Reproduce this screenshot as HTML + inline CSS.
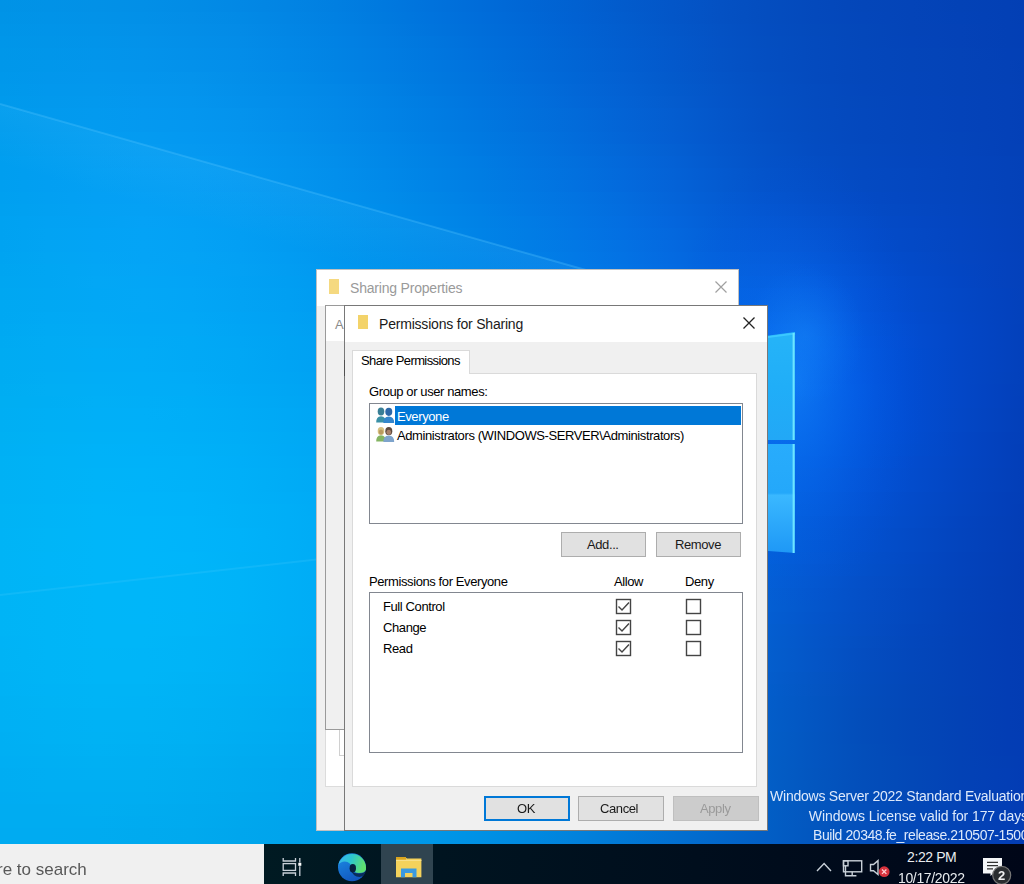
<!DOCTYPE html>
<html><head><meta charset="utf-8">
<style>
html,body{margin:0;padding:0;width:1024px;height:884px;overflow:hidden;background:#0080e0;}
body{position:relative;font-family:"Liberation Sans",sans-serif;}
#bg{position:absolute;left:0;top:0;width:1024px;height:844px;overflow:hidden;}
#bg div{position:absolute;left:0;width:1024px;}
.abs{position:absolute;}
.t{position:absolute;white-space:pre;line-height:1;}
.dlg{position:absolute;box-sizing:border-box;}
.ui{font-size:13px;letter-spacing:-0.4px;color:#000;}
.btn{position:absolute;box-sizing:border-box;background:#e1e1e1;border:1px solid #adadad;}
.cb{position:absolute;box-sizing:border-box;width:14px;height:14px;border:1px solid #333;background:#fff;}
#wrap{position:absolute;left:0;top:0;width:1024px;height:884px;filter:blur(0.45px);}
</style></head><body><div id="wrap">
<div id="bg"><div style="top:0px;height:12px;background:linear-gradient(90deg,rgb(0,147,230) 0px,rgb(1,146,231) 48px,rgb(2,145,231) 96px,rgb(2,143,231) 144px,rgb(2,140,230) 192px,rgb(2,136,229) 240px,rgb(2,132,227) 288px,rgb(1,127,225) 336px,rgb(0,121,223) 384px,rgb(0,114,220) 432px,rgb(0,108,217) 480px,rgb(0,102,213) 528px,rgb(1,97,209) 576px,rgb(2,91,204) 624px,rgb(3,86,200) 672px,rgb(4,81,195) 720px,rgb(4,77,191) 768px,rgb(4,73,188) 816px,rgb(4,70,185) 864px,rgb(4,68,184) 912px,rgb(3,66,182) 960px,rgb(3,64,181) 1008px,rgb(3,63,180) 1024px)"></div><div style="top:12px;height:12px;background:linear-gradient(90deg,rgb(0,148,231) 0px,rgb(1,147,232) 48px,rgb(2,146,232) 96px,rgb(2,144,232) 144px,rgb(3,141,231) 192px,rgb(2,138,230) 240px,rgb(2,133,228) 288px,rgb(1,128,226) 336px,rgb(0,122,223) 384px,rgb(0,115,221) 432px,rgb(0,109,218) 480px,rgb(0,103,214) 528px,rgb(1,97,210) 576px,rgb(2,92,205) 624px,rgb(3,86,200) 672px,rgb(4,81,195) 720px,rgb(4,77,191) 768px,rgb(4,73,188) 816px,rgb(4,70,186) 864px,rgb(4,68,184) 912px,rgb(3,66,183) 960px,rgb(3,64,181) 1008px,rgb(3,63,180) 1024px)"></div><div style="top:24px;height:12px;background:linear-gradient(90deg,rgb(0,149,232) 0px,rgb(1,148,233) 48px,rgb(2,147,233) 96px,rgb(3,145,233) 144px,rgb(3,142,232) 192px,rgb(3,139,231) 240px,rgb(2,134,229) 288px,rgb(1,129,227) 336px,rgb(1,123,224) 384px,rgb(0,116,221) 432px,rgb(0,110,218) 480px,rgb(0,104,215) 528px,rgb(1,98,211) 576px,rgb(2,93,206) 624px,rgb(3,87,201) 672px,rgb(4,82,196) 720px,rgb(4,77,192) 768px,rgb(4,74,188) 816px,rgb(4,71,186) 864px,rgb(4,68,184) 912px,rgb(4,66,183) 960px,rgb(3,64,181) 1008px,rgb(3,63,181) 1024px)"></div><div style="top:36px;height:12px;background:linear-gradient(90deg,rgb(0,150,233) 0px,rgb(1,149,233) 48px,rgb(2,148,234) 96px,rgb(3,146,234) 144px,rgb(3,143,233) 192px,rgb(3,140,232) 240px,rgb(2,135,230) 288px,rgb(1,130,228) 336px,rgb(1,124,225) 384px,rgb(0,118,222) 432px,rgb(0,111,219) 480px,rgb(0,105,216) 528px,rgb(1,99,211) 576px,rgb(2,93,207) 624px,rgb(3,88,202) 672px,rgb(4,82,197) 720px,rgb(4,78,192) 768px,rgb(4,74,189) 816px,rgb(4,71,186) 864px,rgb(4,68,185) 912px,rgb(4,66,183) 960px,rgb(3,64,181) 1008px,rgb(3,63,181) 1024px)"></div><div style="top:48px;height:12px;background:linear-gradient(90deg,rgb(0,151,233) 0px,rgb(1,150,234) 48px,rgb(2,149,235) 96px,rgb(3,147,235) 144px,rgb(3,144,234) 192px,rgb(3,141,233) 240px,rgb(2,136,231) 288px,rgb(1,131,228) 336px,rgb(1,125,226) 384px,rgb(0,119,223) 432px,rgb(0,112,220) 480px,rgb(0,106,216) 528px,rgb(1,100,212) 576px,rgb(2,94,208) 624px,rgb(3,88,203) 672px,rgb(4,83,197) 720px,rgb(4,78,193) 768px,rgb(4,74,189) 816px,rgb(4,71,187) 864px,rgb(4,69,185) 912px,rgb(4,67,183) 960px,rgb(3,64,182) 1008px,rgb(3,64,181) 1024px)"></div><div style="top:60px;height:12px;background:linear-gradient(90deg,rgb(0,151,234) 0px,rgb(1,151,235) 48px,rgb(3,150,236) 96px,rgb(3,148,236) 144px,rgb(3,145,235) 192px,rgb(3,142,234) 240px,rgb(2,137,232) 288px,rgb(1,132,229) 336px,rgb(1,126,227) 384px,rgb(0,120,224) 432px,rgb(0,114,221) 480px,rgb(1,107,217) 528px,rgb(1,101,213) 576px,rgb(2,95,209) 624px,rgb(3,89,204) 672px,rgb(4,83,198) 720px,rgb(4,78,193) 768px,rgb(4,74,190) 816px,rgb(4,71,187) 864px,rgb(4,69,185) 912px,rgb(4,67,184) 960px,rgb(4,65,182) 1008px,rgb(3,64,181) 1024px)"></div><div style="top:72px;height:12px;background:linear-gradient(90deg,rgb(0,152,235) 0px,rgb(2,151,236) 48px,rgb(3,151,237) 96px,rgb(3,149,237) 144px,rgb(4,147,236) 192px,rgb(3,143,234) 240px,rgb(2,139,232) 288px,rgb(1,133,230) 336px,rgb(1,127,227) 384px,rgb(0,121,224) 432px,rgb(0,115,221) 480px,rgb(1,108,218) 528px,rgb(1,102,214) 576px,rgb(3,96,210) 624px,rgb(3,90,204) 672px,rgb(4,84,199) 720px,rgb(4,79,194) 768px,rgb(4,74,190) 816px,rgb(4,71,187) 864px,rgb(4,69,186) 912px,rgb(4,67,184) 960px,rgb(4,65,182) 1008px,rgb(4,64,181) 1024px)"></div><div style="top:84px;height:12px;background:linear-gradient(90deg,rgb(0,153,235) 0px,rgb(2,152,237) 48px,rgb(3,152,237) 96px,rgb(4,150,238) 144px,rgb(4,148,237) 192px,rgb(3,144,235) 240px,rgb(2,140,233) 288px,rgb(2,135,231) 336px,rgb(1,129,228) 384px,rgb(0,122,225) 432px,rgb(0,116,222) 480px,rgb(1,110,219) 528px,rgb(2,103,215) 576px,rgb(3,97,211) 624px,rgb(3,91,205) 672px,rgb(4,85,200) 720px,rgb(4,79,195) 768px,rgb(4,75,191) 816px,rgb(4,71,188) 864px,rgb(4,69,186) 912px,rgb(4,67,184) 960px,rgb(4,65,183) 1008px,rgb(4,64,182) 1024px)"></div><div style="top:96px;height:12px;background:linear-gradient(90deg,rgb(0,154,236) 0px,rgb(2,153,237) 48px,rgb(3,153,238) 96px,rgb(4,151,239) 144px,rgb(4,149,238) 192px,rgb(3,145,236) 240px,rgb(3,141,234) 288px,rgb(2,136,232) 336px,rgb(1,130,229) 384px,rgb(0,124,226) 432px,rgb(0,117,223) 480px,rgb(1,111,220) 528px,rgb(2,104,216) 576px,rgb(3,98,212) 624px,rgb(4,92,206) 672px,rgb(4,85,201) 720px,rgb(4,80,195) 768px,rgb(4,75,191) 816px,rgb(4,72,188) 864px,rgb(4,69,187) 912px,rgb(4,67,185) 960px,rgb(4,65,183) 1008px,rgb(4,64,182) 1024px)"></div><div style="top:108px;height:12px;background:linear-gradient(90deg,rgb(0,155,237) 0px,rgb(2,154,238) 48px,rgb(3,154,239) 96px,rgb(4,152,240) 144px,rgb(4,150,239) 192px,rgb(4,147,237) 240px,rgb(3,142,235) 288px,rgb(2,137,232) 336px,rgb(1,131,230) 384px,rgb(0,125,227) 432px,rgb(0,118,224) 480px,rgb(1,112,220) 528px,rgb(2,106,217) 576px,rgb(3,99,213) 624px,rgb(4,93,208) 672px,rgb(4,86,202) 720px,rgb(4,80,196) 768px,rgb(4,75,192) 816px,rgb(4,72,189) 864px,rgb(4,69,187) 912px,rgb(4,67,185) 960px,rgb(4,65,183) 1008px,rgb(4,64,182) 1024px)"></div><div style="top:120px;height:12px;background:linear-gradient(90deg,rgb(0,155,237) 0px,rgb(2,155,239) 48px,rgb(3,155,240) 96px,rgb(4,153,240) 144px,rgb(4,151,240) 192px,rgb(4,148,238) 240px,rgb(3,143,236) 288px,rgb(2,138,233) 336px,rgb(1,132,230) 384px,rgb(0,126,227) 432px,rgb(0,120,224) 480px,rgb(1,113,221) 528px,rgb(2,107,218) 576px,rgb(3,100,214) 624px,rgb(4,94,209) 672px,rgb(4,87,203) 720px,rgb(4,80,197) 768px,rgb(4,76,192) 816px,rgb(4,72,190) 864px,rgb(4,70,188) 912px,rgb(4,67,186) 960px,rgb(4,65,184) 1008px,rgb(4,64,183) 1024px)"></div><div style="top:132px;height:12px;background:linear-gradient(90deg,rgb(0,156,238) 0px,rgb(2,156,239) 48px,rgb(3,156,241) 96px,rgb(4,155,241) 144px,rgb(4,152,241) 192px,rgb(4,149,239) 240px,rgb(3,145,236) 288px,rgb(2,139,234) 336px,rgb(1,134,231) 384px,rgb(0,127,228) 432px,rgb(0,121,225) 480px,rgb(1,115,222) 528px,rgb(2,108,219) 576px,rgb(3,101,215) 624px,rgb(4,94,210) 672px,rgb(4,87,204) 720px,rgb(4,81,198) 768px,rgb(4,76,193) 816px,rgb(4,72,190) 864px,rgb(4,70,188) 912px,rgb(4,68,186) 960px,rgb(4,65,184) 1008px,rgb(4,64,183) 1024px)"></div><div style="top:144px;height:12px;background:linear-gradient(90deg,rgb(0,157,238) 0px,rgb(2,157,240) 48px,rgb(4,157,241) 96px,rgb(5,156,242) 144px,rgb(5,153,241) 192px,rgb(4,150,240) 240px,rgb(3,146,237) 288px,rgb(2,141,234) 336px,rgb(1,135,232) 384px,rgb(0,129,229) 432px,rgb(0,122,226) 480px,rgb(1,116,223) 528px,rgb(2,109,220) 576px,rgb(3,103,216) 624px,rgb(4,96,211) 672px,rgb(4,88,205) 720px,rgb(4,82,199) 768px,rgb(4,76,194) 816px,rgb(4,73,191) 864px,rgb(4,70,189) 912px,rgb(4,68,187) 960px,rgb(4,65,184) 1008px,rgb(4,65,183) 1024px)"></div><div style="top:156px;height:12px;background:linear-gradient(90deg,rgb(0,158,239) 0px,rgb(2,158,241) 48px,rgb(4,158,242) 96px,rgb(5,157,243) 144px,rgb(5,155,242) 192px,rgb(4,151,240) 240px,rgb(3,147,238) 288px,rgb(2,142,235) 336px,rgb(1,136,232) 384px,rgb(0,130,229) 432px,rgb(0,124,227) 480px,rgb(1,117,224) 528px,rgb(2,111,221) 576px,rgb(3,104,218) 624px,rgb(4,97,213) 672px,rgb(4,89,206) 720px,rgb(4,82,200) 768px,rgb(4,77,195) 816px,rgb(4,73,192) 864px,rgb(4,70,190) 912px,rgb(4,68,188) 960px,rgb(4,66,185) 1008px,rgb(4,65,184) 1024px)"></div><div style="top:168px;height:12px;background:linear-gradient(90deg,rgb(0,158,239) 0px,rgb(2,158,241) 48px,rgb(4,159,243) 96px,rgb(5,158,244) 144px,rgb(5,156,243) 192px,rgb(4,152,241) 240px,rgb(3,148,238) 288px,rgb(2,143,236) 336px,rgb(1,137,233) 384px,rgb(0,131,230) 432px,rgb(0,125,227) 480px,rgb(1,118,225) 528px,rgb(2,112,222) 576px,rgb(3,105,219) 624px,rgb(4,98,214) 672px,rgb(4,90,208) 720px,rgb(4,83,201) 768px,rgb(4,77,196) 816px,rgb(4,73,193) 864px,rgb(4,71,191) 912px,rgb(4,68,188) 960px,rgb(4,66,185) 1008px,rgb(4,65,184) 1024px)"></div><div style="top:180px;height:12px;background:linear-gradient(90deg,rgb(0,159,240) 0px,rgb(2,159,242) 48px,rgb(4,160,243) 96px,rgb(5,159,244) 144px,rgb(5,157,244) 192px,rgb(4,153,242) 240px,rgb(3,149,239) 288px,rgb(2,144,236) 336px,rgb(1,139,234) 384px,rgb(0,132,231) 432px,rgb(0,126,228) 480px,rgb(1,120,226) 528px,rgb(2,113,224) 576px,rgb(3,106,221) 624px,rgb(4,99,216) 672px,rgb(4,91,209) 720px,rgb(4,83,202) 768px,rgb(4,78,197) 816px,rgb(4,74,194) 864px,rgb(4,71,192) 912px,rgb(4,69,189) 960px,rgb(4,66,186) 1008px,rgb(4,65,185) 1024px)"></div><div style="top:192px;height:12px;background:linear-gradient(90deg,rgb(0,160,240) 0px,rgb(2,160,242) 48px,rgb(4,160,244) 96px,rgb(5,160,245) 144px,rgb(5,158,244) 192px,rgb(4,155,242) 240px,rgb(3,150,240) 288px,rgb(1,145,237) 336px,rgb(1,140,234) 384px,rgb(0,134,231) 432px,rgb(0,127,229) 480px,rgb(1,121,227) 528px,rgb(2,115,225) 576px,rgb(3,108,222) 624px,rgb(4,100,217) 672px,rgb(4,92,211) 720px,rgb(4,84,204) 768px,rgb(4,78,198) 816px,rgb(4,74,196) 864px,rgb(4,71,193) 912px,rgb(4,69,190) 960px,rgb(4,66,186) 1008px,rgb(4,65,185) 1024px)"></div><div style="top:204px;height:12px;background:linear-gradient(90deg,rgb(0,161,240) 0px,rgb(2,161,242) 48px,rgb(4,161,244) 96px,rgb(5,161,245) 144px,rgb(5,159,244) 192px,rgb(4,156,243) 240px,rgb(3,151,240) 288px,rgb(1,147,237) 336px,rgb(0,141,235) 384px,rgb(0,135,232) 432px,rgb(0,129,230) 480px,rgb(1,122,228) 528px,rgb(2,116,226) 576px,rgb(3,109,223) 624px,rgb(4,101,219) 672px,rgb(4,93,213) 720px,rgb(4,85,206) 768px,rgb(4,79,200) 816px,rgb(4,75,197) 864px,rgb(4,72,194) 912px,rgb(4,69,191) 960px,rgb(4,66,187) 1008px,rgb(4,65,185) 1024px)"></div><div style="top:216px;height:12px;background:linear-gradient(90deg,rgb(0,162,241) 0px,rgb(2,162,243) 48px,rgb(3,162,244) 96px,rgb(5,162,246) 144px,rgb(4,160,245) 192px,rgb(4,157,243) 240px,rgb(2,153,241) 288px,rgb(1,148,238) 336px,rgb(0,142,235) 384px,rgb(0,136,233) 432px,rgb(0,130,230) 480px,rgb(1,124,229) 528px,rgb(2,117,227) 576px,rgb(3,110,225) 624px,rgb(4,102,221) 672px,rgb(4,94,214) 720px,rgb(4,86,208) 768px,rgb(4,80,202) 816px,rgb(4,76,199) 864px,rgb(4,72,196) 912px,rgb(4,69,192) 960px,rgb(4,66,187) 1008px,rgb(4,65,186) 1024px)"></div><div style="top:228px;height:12px;background:linear-gradient(90deg,rgb(0,162,241) 0px,rgb(2,163,243) 48px,rgb(3,163,245) 96px,rgb(4,163,246) 144px,rgb(4,161,245) 192px,rgb(3,158,243) 240px,rgb(2,154,241) 288px,rgb(1,149,238) 336px,rgb(0,144,236) 384px,rgb(0,138,233) 432px,rgb(0,131,231) 480px,rgb(1,125,229) 528px,rgb(2,118,228) 576px,rgb(3,111,226) 624px,rgb(4,104,222) 672px,rgb(4,95,216) 720px,rgb(4,87,210) 768px,rgb(4,81,204) 816px,rgb(4,76,201) 864px,rgb(4,73,197) 912px,rgb(4,69,193) 960px,rgb(4,66,188) 1008px,rgb(4,65,186) 1024px)"></div><div style="top:240px;height:12px;background:linear-gradient(90deg,rgb(0,163,241) 0px,rgb(2,164,243) 48px,rgb(3,164,245) 96px,rgb(4,164,246) 144px,rgb(4,162,245) 192px,rgb(3,159,244) 240px,rgb(2,155,241) 288px,rgb(1,150,239) 336px,rgb(0,145,236) 384px,rgb(0,139,234) 432px,rgb(0,133,232) 480px,rgb(1,126,230) 528px,rgb(2,120,229) 576px,rgb(3,113,227) 624px,rgb(4,105,224) 672px,rgb(4,96,218) 720px,rgb(4,88,212) 768px,rgb(4,82,207) 816px,rgb(3,77,203) 864px,rgb(3,73,198) 912px,rgb(4,70,193) 960px,rgb(4,66,188) 1008px,rgb(4,65,186) 1024px)"></div><div style="top:252px;height:12px;background:linear-gradient(90deg,rgb(0,164,241) 0px,rgb(2,165,243) 48px,rgb(3,165,245) 96px,rgb(4,164,246) 144px,rgb(4,163,245) 192px,rgb(3,160,244) 240px,rgb(2,156,242) 288px,rgb(1,151,239) 336px,rgb(0,146,237) 384px,rgb(0,140,235) 432px,rgb(0,134,233) 480px,rgb(1,128,231) 528px,rgb(2,121,230) 576px,rgb(3,114,228) 624px,rgb(4,106,225) 672px,rgb(4,98,220) 720px,rgb(4,90,214) 768px,rgb(3,83,209) 816px,rgb(3,78,205) 864px,rgb(3,74,200) 912px,rgb(4,70,194) 960px,rgb(4,66,189) 1008px,rgb(4,65,187) 1024px)"></div><div style="top:264px;height:12px;background:linear-gradient(90deg,rgb(0,165,241) 0px,rgb(1,166,243) 48px,rgb(3,166,245) 96px,rgb(4,165,246) 144px,rgb(3,163,246) 192px,rgb(3,161,244) 240px,rgb(2,157,242) 288px,rgb(1,152,240) 336px,rgb(0,147,237) 384px,rgb(0,141,235) 432px,rgb(0,135,233) 480px,rgb(1,129,232) 528px,rgb(2,122,231) 576px,rgb(3,115,229) 624px,rgb(4,107,226) 672px,rgb(4,99,221) 720px,rgb(4,91,216) 768px,rgb(3,84,212) 816px,rgb(3,79,207) 864px,rgb(3,74,201) 912px,rgb(3,70,195) 960px,rgb(4,66,189) 1008px,rgb(4,65,187) 1024px)"></div><div style="top:276px;height:12px;background:linear-gradient(90deg,rgb(0,166,241) 0px,rgb(1,166,243) 48px,rgb(3,167,245) 96px,rgb(3,166,246) 144px,rgb(3,164,246) 192px,rgb(2,161,244) 240px,rgb(1,158,242) 288px,rgb(1,153,240) 336px,rgb(0,148,238) 384px,rgb(0,143,236) 432px,rgb(0,137,234) 480px,rgb(1,130,233) 528px,rgb(2,123,231) 576px,rgb(3,116,230) 624px,rgb(4,108,227) 672px,rgb(4,100,223) 720px,rgb(3,92,218) 768px,rgb(3,85,214) 816px,rgb(3,80,209) 864px,rgb(3,75,203) 912px,rgb(3,70,196) 960px,rgb(4,66,189) 1008px,rgb(4,65,187) 1024px)"></div><div style="top:288px;height:12px;background:linear-gradient(90deg,rgb(0,167,241) 0px,rgb(1,167,243) 48px,rgb(2,167,245) 96px,rgb(3,167,246) 144px,rgb(3,165,246) 192px,rgb(2,162,244) 240px,rgb(1,159,242) 288px,rgb(0,154,240) 336px,rgb(0,149,238) 384px,rgb(0,144,236) 432px,rgb(0,138,234) 480px,rgb(1,132,233) 528px,rgb(2,125,232) 576px,rgb(3,117,231) 624px,rgb(4,109,228) 672px,rgb(4,101,225) 720px,rgb(3,93,221) 768px,rgb(3,86,216) 816px,rgb(3,80,211) 864px,rgb(3,75,204) 912px,rgb(3,71,197) 960px,rgb(3,66,190) 1008px,rgb(4,65,187) 1024px)"></div><div style="top:300px;height:12px;background:linear-gradient(90deg,rgb(0,168,242) 0px,rgb(1,168,243) 48px,rgb(2,168,245) 96px,rgb(3,168,246) 144px,rgb(2,166,246) 192px,rgb(2,163,244) 240px,rgb(1,160,243) 288px,rgb(0,155,241) 336px,rgb(0,151,239) 384px,rgb(0,145,237) 432px,rgb(0,139,235) 480px,rgb(1,133,234) 528px,rgb(2,126,233) 576px,rgb(3,118,232) 624px,rgb(3,110,229) 672px,rgb(3,102,226) 720px,rgb(3,94,222) 768px,rgb(3,87,218) 816px,rgb(3,81,213) 864px,rgb(3,76,205) 912px,rgb(3,71,197) 960px,rgb(3,66,190) 1008px,rgb(3,65,187) 1024px)"></div><div style="top:312px;height:12px;background:linear-gradient(90deg,rgb(0,168,242) 0px,rgb(1,169,244) 48px,rgb(2,169,245) 96px,rgb(2,168,246) 144px,rgb(2,167,246) 192px,rgb(1,164,245) 240px,rgb(1,161,243) 288px,rgb(0,157,241) 336px,rgb(0,152,239) 384px,rgb(0,146,237) 432px,rgb(0,140,235) 480px,rgb(1,134,234) 528px,rgb(2,127,233) 576px,rgb(3,119,232) 624px,rgb(3,111,230) 672px,rgb(3,103,228) 720px,rgb(3,95,224) 768px,rgb(3,88,220) 816px,rgb(3,82,215) 864px,rgb(3,76,207) 912px,rgb(3,71,198) 960px,rgb(3,66,190) 1008px,rgb(3,65,187) 1024px)"></div><div style="top:324px;height:12px;background:linear-gradient(90deg,rgb(0,169,242) 0px,rgb(1,170,244) 48px,rgb(2,170,245) 96px,rgb(2,169,246) 144px,rgb(2,168,246) 192px,rgb(1,165,245) 240px,rgb(1,162,243) 288px,rgb(0,158,241) 336px,rgb(0,153,239) 384px,rgb(0,147,237) 432px,rgb(0,142,236) 480px,rgb(0,135,235) 528px,rgb(1,128,234) 576px,rgb(2,120,233) 624px,rgb(3,112,231) 672px,rgb(3,104,229) 720px,rgb(3,96,226) 768px,rgb(3,89,222) 816px,rgb(2,83,216) 864px,rgb(3,77,208) 912px,rgb(3,71,199) 960px,rgb(3,66,190) 1008px,rgb(3,64,187) 1024px)"></div><div style="top:336px;height:12px;background:linear-gradient(90deg,rgb(0,170,242) 0px,rgb(1,171,244) 48px,rgb(2,171,245) 96px,rgb(2,170,246) 144px,rgb(1,169,246) 192px,rgb(1,166,245) 240px,rgb(0,163,243) 288px,rgb(0,159,242) 336px,rgb(0,154,240) 384px,rgb(0,149,238) 432px,rgb(0,143,236) 480px,rgb(0,136,235) 528px,rgb(1,129,234) 576px,rgb(2,121,233) 624px,rgb(3,113,232) 672px,rgb(3,104,230) 720px,rgb(3,97,227) 768px,rgb(2,90,224) 816px,rgb(2,83,218) 864px,rgb(3,77,209) 912px,rgb(3,71,199) 960px,rgb(3,66,190) 1008px,rgb(3,64,187) 1024px)"></div><div style="top:348px;height:12px;background:linear-gradient(90deg,rgb(0,171,242) 0px,rgb(1,171,244) 48px,rgb(1,172,246) 96px,rgb(2,171,246) 144px,rgb(1,169,246) 192px,rgb(1,167,245) 240px,rgb(0,163,243) 288px,rgb(0,160,242) 336px,rgb(0,155,240) 384px,rgb(0,150,238) 432px,rgb(0,144,237) 480px,rgb(0,137,235) 528px,rgb(1,130,234) 576px,rgb(2,122,233) 624px,rgb(3,114,232) 672px,rgb(3,105,231) 720px,rgb(3,97,228) 768px,rgb(2,90,225) 816px,rgb(2,84,219) 864px,rgb(2,77,209) 912px,rgb(3,71,199) 960px,rgb(3,66,190) 1008px,rgb(3,64,187) 1024px)"></div><div style="top:360px;height:12px;background:linear-gradient(90deg,rgb(0,172,242) 0px,rgb(1,172,244) 48px,rgb(1,172,246) 96px,rgb(1,172,247) 144px,rgb(1,170,246) 192px,rgb(0,168,245) 240px,rgb(0,164,244) 288px,rgb(0,160,242) 336px,rgb(0,156,240) 384px,rgb(0,151,238) 432px,rgb(0,145,237) 480px,rgb(0,138,235) 528px,rgb(1,131,235) 576px,rgb(2,123,234) 624px,rgb(2,114,233) 672px,rgb(3,106,231) 720px,rgb(2,98,229) 768px,rgb(2,91,227) 816px,rgb(2,84,220) 864px,rgb(2,77,210) 912px,rgb(3,71,199) 960px,rgb(3,66,190) 1008px,rgb(3,64,187) 1024px)"></div><div style="top:372px;height:12px;background:linear-gradient(90deg,rgb(0,172,242) 0px,rgb(1,173,244) 48px,rgb(1,173,246) 96px,rgb(1,173,247) 144px,rgb(1,171,247) 192px,rgb(0,168,245) 240px,rgb(0,165,244) 288px,rgb(0,161,242) 336px,rgb(0,157,241) 384px,rgb(0,152,239) 432px,rgb(0,146,237) 480px,rgb(0,139,236) 528px,rgb(1,132,235) 576px,rgb(2,123,234) 624px,rgb(2,115,233) 672px,rgb(2,106,232) 720px,rgb(2,99,230) 768px,rgb(2,91,227) 816px,rgb(2,84,221) 864px,rgb(2,77,210) 912px,rgb(3,71,199) 960px,rgb(3,66,189) 1008px,rgb(3,64,187) 1024px)"></div><div style="top:384px;height:12px;background:linear-gradient(90deg,rgb(0,173,242) 0px,rgb(1,174,244) 48px,rgb(1,174,246) 96px,rgb(1,173,247) 144px,rgb(1,172,247) 192px,rgb(0,169,246) 240px,rgb(0,166,244) 288px,rgb(0,162,243) 336px,rgb(0,158,241) 384px,rgb(0,153,239) 432px,rgb(0,147,237) 480px,rgb(0,140,236) 528px,rgb(1,132,235) 576px,rgb(2,124,234) 624px,rgb(2,115,233) 672px,rgb(2,107,232) 720px,rgb(2,99,230) 768px,rgb(2,92,228) 816px,rgb(2,85,221) 864px,rgb(2,77,210) 912px,rgb(3,71,199) 960px,rgb(3,65,189) 1008px,rgb(3,64,186) 1024px)"></div><div style="top:396px;height:12px;background:linear-gradient(90deg,rgb(0,174,242) 0px,rgb(0,174,244) 48px,rgb(1,175,246) 96px,rgb(1,174,247) 144px,rgb(0,173,247) 192px,rgb(0,170,246) 240px,rgb(0,167,244) 288px,rgb(0,163,243) 336px,rgb(0,159,241) 384px,rgb(0,153,239) 432px,rgb(0,148,237) 480px,rgb(0,141,236) 528px,rgb(1,133,235) 576px,rgb(1,125,234) 624px,rgb(2,116,233) 672px,rgb(2,107,232) 720px,rgb(2,99,230) 768px,rgb(2,92,227) 816px,rgb(2,85,221) 864px,rgb(2,77,210) 912px,rgb(3,71,199) 960px,rgb(3,65,189) 1008px,rgb(3,63,186) 1024px)"></div><div style="top:408px;height:12px;background:linear-gradient(90deg,rgb(0,174,243) 0px,rgb(0,175,245) 48px,rgb(1,175,247) 96px,rgb(1,175,248) 144px,rgb(0,174,247) 192px,rgb(0,171,246) 240px,rgb(0,168,245) 288px,rgb(0,164,243) 336px,rgb(0,160,241) 384px,rgb(0,154,239) 432px,rgb(0,148,238) 480px,rgb(0,142,236) 528px,rgb(1,134,235) 576px,rgb(1,125,234) 624px,rgb(2,116,233) 672px,rgb(2,108,232) 720px,rgb(2,99,230) 768px,rgb(2,92,227) 816px,rgb(2,85,220) 864px,rgb(2,77,210) 912px,rgb(3,71,198) 960px,rgb(3,65,188) 1008px,rgb(3,63,185) 1024px)"></div><div style="top:420px;height:12px;background:linear-gradient(90deg,rgb(0,175,243) 0px,rgb(0,176,245) 48px,rgb(0,176,247) 96px,rgb(0,176,248) 144px,rgb(0,174,248) 192px,rgb(0,172,247) 240px,rgb(0,169,245) 288px,rgb(0,165,243) 336px,rgb(0,160,242) 384px,rgb(0,155,240) 432px,rgb(0,149,238) 480px,rgb(0,142,236) 528px,rgb(0,134,235) 576px,rgb(1,126,234) 624px,rgb(2,117,233) 672px,rgb(2,108,232) 720px,rgb(2,100,230) 768px,rgb(2,92,226) 816px,rgb(2,84,219) 864px,rgb(2,77,209) 912px,rgb(3,71,198) 960px,rgb(3,65,188) 1008px,rgb(3,63,185) 1024px)"></div><div style="top:432px;height:12px;background:linear-gradient(90deg,rgb(0,176,243) 0px,rgb(0,177,245) 48px,rgb(0,177,247) 96px,rgb(0,177,248) 144px,rgb(0,175,248) 192px,rgb(0,173,247) 240px,rgb(0,170,245) 288px,rgb(0,166,244) 336px,rgb(0,161,242) 384px,rgb(0,156,240) 432px,rgb(0,150,238) 480px,rgb(0,143,236) 528px,rgb(0,135,234) 576px,rgb(1,126,234) 624px,rgb(2,117,233) 672px,rgb(2,108,231) 720px,rgb(2,100,229) 768px,rgb(2,92,225) 816px,rgb(2,84,218) 864px,rgb(2,77,208) 912px,rgb(3,70,197) 960px,rgb(3,64,187) 1008px,rgb(3,63,185) 1024px)"></div><div style="top:444px;height:12px;background:linear-gradient(90deg,rgb(0,176,244) 0px,rgb(0,177,246) 48px,rgb(0,178,248) 96px,rgb(0,177,249) 144px,rgb(0,176,248) 192px,rgb(0,174,247) 240px,rgb(0,170,246) 288px,rgb(0,166,244) 336px,rgb(0,162,242) 384px,rgb(0,156,240) 432px,rgb(0,150,238) 480px,rgb(0,143,236) 528px,rgb(0,135,234) 576px,rgb(1,126,233) 624px,rgb(2,117,232) 672px,rgb(2,108,231) 720px,rgb(2,99,228) 768px,rgb(2,92,224) 816px,rgb(2,84,217) 864px,rgb(2,77,207) 912px,rgb(3,70,197) 960px,rgb(3,64,187) 1008px,rgb(3,62,184) 1024px)"></div><div style="top:456px;height:12px;background:linear-gradient(90deg,rgb(0,177,244) 0px,rgb(0,178,246) 48px,rgb(0,178,248) 96px,rgb(0,178,249) 144px,rgb(0,177,249) 192px,rgb(0,174,248) 240px,rgb(0,171,246) 288px,rgb(0,167,244) 336px,rgb(0,162,242) 384px,rgb(0,157,240) 432px,rgb(0,151,238) 480px,rgb(0,144,236) 528px,rgb(0,136,234) 576px,rgb(1,127,233) 624px,rgb(2,117,232) 672px,rgb(2,108,230) 720px,rgb(2,99,227) 768px,rgb(2,91,223) 816px,rgb(2,84,216) 864px,rgb(3,76,206) 912px,rgb(3,70,196) 960px,rgb(3,64,187) 1008px,rgb(3,62,184) 1024px)"></div><div style="top:468px;height:12px;background:linear-gradient(90deg,rgb(0,177,244) 0px,rgb(0,178,246) 48px,rgb(0,179,248) 96px,rgb(0,179,249) 144px,rgb(0,177,249) 192px,rgb(0,175,248) 240px,rgb(0,172,246) 288px,rgb(0,168,244) 336px,rgb(0,163,242) 384px,rgb(0,158,240) 432px,rgb(0,151,238) 480px,rgb(0,144,236) 528px,rgb(0,136,234) 576px,rgb(1,127,233) 624px,rgb(2,117,231) 672px,rgb(2,108,229) 720px,rgb(2,99,226) 768px,rgb(3,91,221) 816px,rgb(3,83,214) 864px,rgb(3,76,205) 912px,rgb(3,70,195) 960px,rgb(3,64,186) 1008px,rgb(3,62,184) 1024px)"></div><div style="top:480px;height:12px;background:linear-gradient(90deg,rgb(0,178,245) 0px,rgb(0,179,247) 48px,rgb(0,180,248) 96px,rgb(0,179,250) 144px,rgb(0,178,249) 192px,rgb(0,176,248) 240px,rgb(0,172,246) 288px,rgb(0,168,245) 336px,rgb(0,164,243) 384px,rgb(0,158,240) 432px,rgb(0,152,238) 480px,rgb(0,145,236) 528px,rgb(0,136,234) 576px,rgb(1,127,232) 624px,rgb(2,117,231) 672px,rgb(2,108,228) 720px,rgb(3,99,225) 768px,rgb(3,91,220) 816px,rgb(3,83,213) 864px,rgb(3,76,204) 912px,rgb(3,69,194) 960px,rgb(3,64,186) 1008px,rgb(3,62,183) 1024px)"></div><div style="top:492px;height:12px;background:linear-gradient(90deg,rgb(0,178,245) 0px,rgb(0,179,247) 48px,rgb(0,180,249) 96px,rgb(0,180,250) 144px,rgb(0,179,250) 192px,rgb(0,176,248) 240px,rgb(0,173,247) 288px,rgb(0,169,245) 336px,rgb(0,164,243) 384px,rgb(0,158,241) 432px,rgb(0,152,238) 480px,rgb(0,145,236) 528px,rgb(0,136,234) 576px,rgb(1,127,232) 624px,rgb(2,117,230) 672px,rgb(2,108,227) 720px,rgb(3,99,224) 768px,rgb(3,90,218) 816px,rgb(3,82,211) 864px,rgb(3,75,202) 912px,rgb(3,69,193) 960px,rgb(3,63,185) 1008px,rgb(3,62,183) 1024px)"></div><div style="top:504px;height:12px;background:linear-gradient(90deg,rgb(0,179,245) 0px,rgb(0,180,247) 48px,rgb(0,181,249) 96px,rgb(0,180,250) 144px,rgb(0,179,250) 192px,rgb(0,177,248) 240px,rgb(0,174,247) 288px,rgb(0,169,245) 336px,rgb(0,164,243) 384px,rgb(0,159,241) 432px,rgb(0,152,238) 480px,rgb(0,145,236) 528px,rgb(0,136,234) 576px,rgb(1,127,232) 624px,rgb(2,117,229) 672px,rgb(2,107,226) 720px,rgb(3,98,222) 768px,rgb(3,90,217) 816px,rgb(3,82,210) 864px,rgb(3,75,201) 912px,rgb(3,69,192) 960px,rgb(3,63,185) 1008px,rgb(3,61,182) 1024px)"></div><div style="top:516px;height:12px;background:linear-gradient(90deg,rgb(0,179,245) 0px,rgb(0,180,247) 48px,rgb(0,181,249) 96px,rgb(0,181,250) 144px,rgb(0,180,250) 192px,rgb(0,177,248) 240px,rgb(0,174,247) 288px,rgb(0,170,245) 336px,rgb(0,165,243) 384px,rgb(0,159,241) 432px,rgb(0,152,238) 480px,rgb(0,145,236) 528px,rgb(1,136,233) 576px,rgb(1,127,231) 624px,rgb(2,117,228) 672px,rgb(3,107,225) 720px,rgb(3,98,221) 768px,rgb(3,89,215) 816px,rgb(3,81,208) 864px,rgb(3,75,200) 912px,rgb(3,68,191) 960px,rgb(3,63,184) 1008px,rgb(3,61,182) 1024px)"></div><div style="top:528px;height:12px;background:linear-gradient(90deg,rgb(0,179,246) 0px,rgb(0,181,247) 48px,rgb(0,181,249) 96px,rgb(0,181,250) 144px,rgb(0,180,250) 192px,rgb(0,178,249) 240px,rgb(0,174,247) 288px,rgb(0,170,245) 336px,rgb(0,165,243) 384px,rgb(0,159,241) 432px,rgb(0,153,238) 480px,rgb(0,145,236) 528px,rgb(1,136,233) 576px,rgb(1,127,231) 624px,rgb(2,117,228) 672px,rgb(3,107,224) 720px,rgb(3,97,220) 768px,rgb(3,89,214) 816px,rgb(3,81,207) 864px,rgb(3,74,198) 912px,rgb(3,68,190) 960px,rgb(3,63,184) 1008px,rgb(3,61,181) 1024px)"></div><div style="top:540px;height:12px;background:linear-gradient(90deg,rgb(0,180,246) 0px,rgb(0,181,247) 48px,rgb(0,182,249) 96px,rgb(0,182,250) 144px,rgb(0,180,250) 192px,rgb(0,178,249) 240px,rgb(0,175,247) 288px,rgb(0,170,245) 336px,rgb(0,165,243) 384px,rgb(0,159,241) 432px,rgb(0,153,238) 480px,rgb(0,145,236) 528px,rgb(1,136,233) 576px,rgb(1,127,230) 624px,rgb(2,116,227) 672px,rgb(3,106,223) 720px,rgb(3,97,218) 768px,rgb(3,88,212) 816px,rgb(3,80,205) 864px,rgb(3,74,197) 912px,rgb(3,68,189) 960px,rgb(3,62,183) 1008px,rgb(3,61,181) 1024px)"></div><div style="top:552px;height:12px;background:linear-gradient(90deg,rgb(0,180,246) 0px,rgb(0,181,248) 48px,rgb(0,182,249) 96px,rgb(0,182,250) 144px,rgb(0,181,250) 192px,rgb(0,178,248) 240px,rgb(0,175,247) 288px,rgb(0,171,245) 336px,rgb(0,166,243) 384px,rgb(0,160,241) 432px,rgb(0,153,238) 480px,rgb(0,145,235) 528px,rgb(1,136,232) 576px,rgb(1,126,229) 624px,rgb(2,116,226) 672px,rgb(3,106,222) 720px,rgb(3,96,217) 768px,rgb(4,88,211) 816px,rgb(3,80,203) 864px,rgb(3,73,196) 912px,rgb(3,67,188) 960px,rgb(3,62,182) 1008px,rgb(3,60,181) 1024px)"></div><div style="top:564px;height:12px;background:linear-gradient(90deg,rgb(0,180,246) 0px,rgb(0,181,248) 48px,rgb(0,182,249) 96px,rgb(0,182,250) 144px,rgb(0,181,249) 192px,rgb(0,179,248) 240px,rgb(0,175,247) 288px,rgb(0,171,245) 336px,rgb(0,166,243) 384px,rgb(0,160,241) 432px,rgb(0,153,238) 480px,rgb(0,145,235) 528px,rgb(1,136,232) 576px,rgb(1,126,229) 624px,rgb(2,116,225) 672px,rgb(3,106,221) 720px,rgb(3,96,215) 768px,rgb(4,87,209) 816px,rgb(3,80,202) 864px,rgb(3,73,194) 912px,rgb(3,67,188) 960px,rgb(3,62,182) 1008px,rgb(3,60,180) 1024px)"></div><div style="top:576px;height:12px;background:linear-gradient(90deg,rgb(0,180,246) 0px,rgb(0,181,247) 48px,rgb(0,182,249) 96px,rgb(0,182,249) 144px,rgb(0,181,249) 192px,rgb(0,179,248) 240px,rgb(0,175,247) 288px,rgb(0,171,245) 336px,rgb(0,166,243) 384px,rgb(0,160,241) 432px,rgb(0,153,238) 480px,rgb(0,145,235) 528px,rgb(1,136,232) 576px,rgb(2,126,228) 624px,rgb(2,116,224) 672px,rgb(3,105,219) 720px,rgb(4,95,214) 768px,rgb(4,87,207) 816px,rgb(4,79,200) 864px,rgb(3,73,193) 912px,rgb(3,67,187) 960px,rgb(3,62,181) 1008px,rgb(3,60,180) 1024px)"></div><div style="top:588px;height:12px;background:linear-gradient(90deg,rgb(0,180,246) 0px,rgb(0,181,247) 48px,rgb(0,182,249) 96px,rgb(0,182,249) 144px,rgb(0,181,249) 192px,rgb(0,179,248) 240px,rgb(0,175,247) 288px,rgb(0,171,245) 336px,rgb(0,166,243) 384px,rgb(0,160,241) 432px,rgb(0,153,238) 480px,rgb(0,145,235) 528px,rgb(1,135,231) 576px,rgb(2,126,227) 624px,rgb(2,115,223) 672px,rgb(3,105,218) 720px,rgb(4,95,212) 768px,rgb(4,86,206) 816px,rgb(4,79,199) 864px,rgb(3,72,192) 912px,rgb(3,67,186) 960px,rgb(3,62,181) 1008px,rgb(3,60,180) 1024px)"></div><div style="top:600px;height:12px;background:linear-gradient(90deg,rgb(0,180,246) 0px,rgb(0,181,247) 48px,rgb(0,182,248) 96px,rgb(0,182,249) 144px,rgb(0,181,249) 192px,rgb(0,179,248) 240px,rgb(0,175,246) 288px,rgb(0,171,245) 336px,rgb(0,166,243) 384px,rgb(0,160,241) 432px,rgb(0,152,238) 480px,rgb(0,144,235) 528px,rgb(1,135,231) 576px,rgb(2,125,227) 624px,rgb(2,115,222) 672px,rgb(3,105,217) 720px,rgb(4,95,211) 768px,rgb(4,86,204) 816px,rgb(4,78,197) 864px,rgb(3,72,191) 912px,rgb(3,66,185) 960px,rgb(3,61,181) 1008px,rgb(3,60,179) 1024px)"></div><div style="top:612px;height:12px;background:linear-gradient(90deg,rgb(0,180,246) 0px,rgb(0,181,247) 48px,rgb(0,182,248) 96px,rgb(0,182,249) 144px,rgb(0,181,248) 192px,rgb(0,179,247) 240px,rgb(0,175,246) 288px,rgb(0,171,245) 336px,rgb(0,166,243) 384px,rgb(0,159,241) 432px,rgb(0,152,238) 480px,rgb(0,144,234) 528px,rgb(1,135,230) 576px,rgb(2,125,226) 624px,rgb(2,115,221) 672px,rgb(3,104,216) 720px,rgb(4,94,210) 768px,rgb(4,85,203) 816px,rgb(4,78,196) 864px,rgb(3,72,190) 912px,rgb(3,66,184) 960px,rgb(3,61,180) 1008px,rgb(3,60,179) 1024px)"></div><div style="top:624px;height:12px;background:linear-gradient(90deg,rgb(0,180,246) 0px,rgb(0,181,247) 48px,rgb(0,182,248) 96px,rgb(0,182,248) 144px,rgb(0,181,248) 192px,rgb(0,178,247) 240px,rgb(0,175,246) 288px,rgb(0,171,244) 336px,rgb(0,165,243) 384px,rgb(0,159,241) 432px,rgb(0,152,238) 480px,rgb(0,144,234) 528px,rgb(1,135,230) 576px,rgb(2,125,225) 624px,rgb(2,115,220) 672px,rgb(3,104,215) 720px,rgb(4,94,208) 768px,rgb(4,85,201) 816px,rgb(4,78,195) 864px,rgb(3,71,189) 912px,rgb(3,66,184) 960px,rgb(3,61,180) 1008px,rgb(3,60,179) 1024px)"></div><div style="top:636px;height:12px;background:linear-gradient(90deg,rgb(0,179,246) 0px,rgb(0,181,247) 48px,rgb(0,182,248) 96px,rgb(0,182,248) 144px,rgb(0,180,247) 192px,rgb(0,178,247) 240px,rgb(0,175,245) 288px,rgb(0,170,244) 336px,rgb(0,165,242) 384px,rgb(0,159,240) 432px,rgb(0,152,238) 480px,rgb(0,144,234) 528px,rgb(1,135,229) 576px,rgb(2,125,225) 624px,rgb(2,114,219) 672px,rgb(3,104,214) 720px,rgb(4,94,207) 768px,rgb(4,85,200) 816px,rgb(4,78,193) 864px,rgb(3,71,188) 912px,rgb(3,66,183) 960px,rgb(3,61,180) 1008px,rgb(3,60,179) 1024px)"></div><div style="top:648px;height:12px;background:linear-gradient(90deg,rgb(0,179,245) 0px,rgb(0,181,247) 48px,rgb(0,182,247) 96px,rgb(0,181,248) 144px,rgb(0,180,247) 192px,rgb(0,178,246) 240px,rgb(0,174,245) 288px,rgb(0,170,244) 336px,rgb(0,165,242) 384px,rgb(0,159,240) 432px,rgb(0,152,237) 480px,rgb(0,143,233) 528px,rgb(1,134,229) 576px,rgb(2,124,224) 624px,rgb(2,114,219) 672px,rgb(3,104,212) 720px,rgb(4,94,206) 768px,rgb(4,85,199) 816px,rgb(4,77,192) 864px,rgb(3,71,187) 912px,rgb(3,66,183) 960px,rgb(3,61,180) 1008px,rgb(3,60,179) 1024px)"></div><div style="top:660px;height:12px;background:linear-gradient(90deg,rgb(0,179,245) 0px,rgb(0,180,246) 48px,rgb(0,181,247) 96px,rgb(0,181,247) 144px,rgb(0,180,247) 192px,rgb(0,177,246) 240px,rgb(0,174,244) 288px,rgb(0,170,243) 336px,rgb(0,165,242) 384px,rgb(0,159,240) 432px,rgb(0,151,237) 480px,rgb(1,143,233) 528px,rgb(1,134,228) 576px,rgb(2,124,223) 624px,rgb(2,114,218) 672px,rgb(3,104,211) 720px,rgb(4,94,205) 768px,rgb(4,85,198) 816px,rgb(3,77,191) 864px,rgb(3,71,186) 912px,rgb(3,66,182) 960px,rgb(3,61,180) 1008px,rgb(3,60,179) 1024px)"></div><div style="top:672px;height:12px;background:linear-gradient(90deg,rgb(0,178,245) 0px,rgb(0,180,246) 48px,rgb(0,181,247) 96px,rgb(0,181,247) 144px,rgb(0,179,246) 192px,rgb(0,177,245) 240px,rgb(0,173,244) 288px,rgb(0,169,243) 336px,rgb(0,164,242) 384px,rgb(0,158,240) 432px,rgb(0,151,237) 480px,rgb(1,143,233) 528px,rgb(1,134,228) 576px,rgb(2,124,223) 624px,rgb(2,114,217) 672px,rgb(3,103,210) 720px,rgb(4,93,204) 768px,rgb(4,85,196) 816px,rgb(3,77,190) 864px,rgb(3,71,185) 912px,rgb(3,66,182) 960px,rgb(3,61,180) 1008px,rgb(3,60,179) 1024px)"></div><div style="top:684px;height:12px;background:linear-gradient(90deg,rgb(0,178,245) 0px,rgb(0,179,246) 48px,rgb(0,180,246) 96px,rgb(0,180,246) 144px,rgb(0,178,245) 192px,rgb(0,176,244) 240px,rgb(0,173,243) 288px,rgb(0,169,242) 336px,rgb(0,164,241) 384px,rgb(0,158,239) 432px,rgb(0,151,236) 480px,rgb(1,143,232) 528px,rgb(1,133,227) 576px,rgb(2,124,222) 624px,rgb(2,113,216) 672px,rgb(3,103,209) 720px,rgb(3,93,203) 768px,rgb(4,85,195) 816px,rgb(3,77,189) 864px,rgb(3,71,184) 912px,rgb(3,66,182) 960px,rgb(3,61,180) 1008px,rgb(3,60,179) 1024px)"></div><div style="top:696px;height:12px;background:linear-gradient(90deg,rgb(0,177,244) 0px,rgb(0,179,245) 48px,rgb(0,180,246) 96px,rgb(0,179,246) 144px,rgb(0,178,245) 192px,rgb(0,175,244) 240px,rgb(0,172,243) 288px,rgb(0,168,242) 336px,rgb(0,163,241) 384px,rgb(0,157,239) 432px,rgb(0,150,236) 480px,rgb(1,142,232) 528px,rgb(1,133,227) 576px,rgb(2,123,221) 624px,rgb(2,113,215) 672px,rgb(3,103,209) 720px,rgb(3,93,202) 768px,rgb(3,85,194) 816px,rgb(3,77,188) 864px,rgb(3,71,184) 912px,rgb(3,66,181) 960px,rgb(3,61,180) 1008px,rgb(3,60,179) 1024px)"></div><div style="top:708px;height:12px;background:linear-gradient(90deg,rgb(0,177,244) 0px,rgb(0,178,245) 48px,rgb(0,179,245) 96px,rgb(0,179,245) 144px,rgb(0,177,244) 192px,rgb(0,175,243) 240px,rgb(0,171,242) 288px,rgb(0,167,241) 336px,rgb(0,163,240) 384px,rgb(0,157,238) 432px,rgb(0,150,235) 480px,rgb(1,142,231) 528px,rgb(1,133,226) 576px,rgb(2,123,221) 624px,rgb(2,113,214) 672px,rgb(3,103,208) 720px,rgb(3,93,201) 768px,rgb(3,85,194) 816px,rgb(3,77,187) 864px,rgb(3,71,183) 912px,rgb(3,66,181) 960px,rgb(3,61,180) 1008px,rgb(3,60,179) 1024px)"></div><div style="top:720px;height:12px;background:linear-gradient(90deg,rgb(0,176,244) 0px,rgb(0,177,244) 48px,rgb(0,178,245) 96px,rgb(0,178,244) 144px,rgb(0,176,244) 192px,rgb(0,174,242) 240px,rgb(0,171,242) 288px,rgb(0,167,241) 336px,rgb(0,162,240) 384px,rgb(0,156,238) 432px,rgb(0,150,235) 480px,rgb(1,141,231) 528px,rgb(1,133,226) 576px,rgb(2,123,220) 624px,rgb(2,113,214) 672px,rgb(3,103,207) 720px,rgb(3,94,200) 768px,rgb(3,85,193) 816px,rgb(3,77,186) 864px,rgb(3,71,183) 912px,rgb(3,66,181) 960px,rgb(3,61,180) 1008px,rgb(3,60,179) 1024px)"></div><div style="top:732px;height:12px;background:linear-gradient(90deg,rgb(0,175,243) 0px,rgb(0,177,244) 48px,rgb(0,178,244) 96px,rgb(0,177,244) 144px,rgb(0,176,243) 192px,rgb(0,173,242) 240px,rgb(0,170,241) 288px,rgb(0,166,240) 336px,rgb(0,161,239) 384px,rgb(0,156,237) 432px,rgb(0,149,234) 480px,rgb(1,141,230) 528px,rgb(1,132,225) 576px,rgb(2,123,219) 624px,rgb(2,113,213) 672px,rgb(3,103,206) 720px,rgb(3,94,199) 768px,rgb(3,85,192) 816px,rgb(3,77,186) 864px,rgb(3,71,183) 912px,rgb(3,66,181) 960px,rgb(3,61,180) 1008px,rgb(3,60,180) 1024px)"></div><div style="top:744px;height:12px;background:linear-gradient(90deg,rgb(0,175,243) 0px,rgb(0,176,243) 48px,rgb(0,177,244) 96px,rgb(0,176,243) 144px,rgb(0,175,242) 192px,rgb(0,172,241) 240px,rgb(0,169,240) 288px,rgb(0,165,239) 336px,rgb(0,161,238) 384px,rgb(0,155,236) 432px,rgb(0,149,234) 480px,rgb(0,141,229) 528px,rgb(1,132,224) 576px,rgb(2,123,219) 624px,rgb(2,113,212) 672px,rgb(3,103,206) 720px,rgb(3,94,199) 768px,rgb(3,85,192) 816px,rgb(3,78,186) 864px,rgb(3,71,183) 912px,rgb(3,66,181) 960px,rgb(3,61,180) 1008px,rgb(3,60,180) 1024px)"></div><div style="top:756px;height:12px;background:linear-gradient(90deg,rgb(0,174,243) 0px,rgb(0,175,243) 48px,rgb(0,176,243) 96px,rgb(0,175,243) 144px,rgb(0,174,242) 192px,rgb(0,171,240) 240px,rgb(0,168,240) 288px,rgb(0,165,239) 336px,rgb(0,160,238) 384px,rgb(0,155,236) 432px,rgb(0,148,233) 480px,rgb(0,140,229) 528px,rgb(1,132,224) 576px,rgb(1,122,218) 624px,rgb(2,113,212) 672px,rgb(2,103,205) 720px,rgb(3,94,198) 768px,rgb(3,85,192) 816px,rgb(3,78,186) 864px,rgb(3,72,183) 912px,rgb(3,66,181) 960px,rgb(3,62,180) 1008px,rgb(3,60,180) 1024px)"></div><div style="top:768px;height:12px;background:linear-gradient(90deg,rgb(0,173,242) 0px,rgb(0,174,243) 48px,rgb(0,175,243) 96px,rgb(0,175,242) 144px,rgb(0,173,241) 192px,rgb(0,170,240) 240px,rgb(0,167,239) 288px,rgb(0,164,238) 336px,rgb(0,160,237) 384px,rgb(0,154,235) 432px,rgb(0,148,232) 480px,rgb(0,140,228) 528px,rgb(1,131,223) 576px,rgb(1,122,217) 624px,rgb(2,113,211) 672px,rgb(2,103,205) 720px,rgb(3,94,198) 768px,rgb(3,85,191) 816px,rgb(3,78,186) 864px,rgb(3,72,183) 912px,rgb(3,66,181) 960px,rgb(3,62,181) 1008px,rgb(3,60,180) 1024px)"></div><div style="top:780px;height:12px;background:linear-gradient(90deg,rgb(0,173,242) 0px,rgb(0,174,242) 48px,rgb(0,174,242) 96px,rgb(0,174,241) 144px,rgb(0,172,240) 192px,rgb(0,170,239) 240px,rgb(0,167,238) 288px,rgb(0,163,237) 336px,rgb(0,159,236) 384px,rgb(0,154,234) 432px,rgb(0,147,232) 480px,rgb(0,139,228) 528px,rgb(1,131,223) 576px,rgb(1,122,217) 624px,rgb(2,112,211) 672px,rgb(2,103,204) 720px,rgb(3,94,198) 768px,rgb(3,86,191) 816px,rgb(3,78,186) 864px,rgb(3,72,183) 912px,rgb(3,66,182) 960px,rgb(3,62,181) 1008px,rgb(3,60,180) 1024px)"></div><div style="top:792px;height:12px;background:linear-gradient(90deg,rgb(0,172,242) 0px,rgb(0,173,242) 48px,rgb(0,173,242) 96px,rgb(0,173,241) 144px,rgb(0,171,240) 192px,rgb(0,169,238) 240px,rgb(0,166,238) 288px,rgb(0,162,237) 336px,rgb(0,158,236) 384px,rgb(0,153,234) 432px,rgb(0,147,231) 480px,rgb(0,139,227) 528px,rgb(1,131,222) 576px,rgb(1,122,216) 624px,rgb(2,112,210) 672px,rgb(2,103,204) 720px,rgb(2,94,197) 768px,rgb(3,86,191) 816px,rgb(3,78,186) 864px,rgb(3,72,183) 912px,rgb(3,67,182) 960px,rgb(3,62,181) 1008px,rgb(3,60,180) 1024px)"></div><div style="top:804px;height:12px;background:linear-gradient(90deg,rgb(0,172,241) 0px,rgb(0,172,241) 48px,rgb(0,173,241) 96px,rgb(0,172,240) 144px,rgb(0,170,239) 192px,rgb(0,168,238) 240px,rgb(0,165,237) 288px,rgb(0,162,236) 336px,rgb(0,158,235) 384px,rgb(0,152,233) 432px,rgb(0,146,230) 480px,rgb(0,139,226) 528px,rgb(1,130,221) 576px,rgb(1,121,216) 624px,rgb(2,112,210) 672px,rgb(2,103,203) 720px,rgb(2,94,197) 768px,rgb(3,86,191) 816px,rgb(3,79,187) 864px,rgb(3,72,183) 912px,rgb(3,67,182) 960px,rgb(3,62,181) 1008px,rgb(3,60,180) 1024px)"></div><div style="top:816px;height:12px;background:linear-gradient(90deg,rgb(0,172,241) 0px,rgb(0,172,241) 48px,rgb(0,172,241) 96px,rgb(0,171,240) 144px,rgb(0,170,239) 192px,rgb(0,167,237) 240px,rgb(0,164,236) 288px,rgb(0,161,236) 336px,rgb(0,157,234) 384px,rgb(0,152,232) 432px,rgb(0,146,230) 480px,rgb(0,138,226) 528px,rgb(1,130,221) 576px,rgb(1,121,215) 624px,rgb(2,112,209) 672px,rgb(2,103,203) 720px,rgb(2,94,197) 768px,rgb(3,86,191) 816px,rgb(3,79,187) 864px,rgb(3,72,184) 912px,rgb(3,67,182) 960px,rgb(3,62,181) 1008px,rgb(3,60,180) 1024px)"></div><div style="top:828px;height:12px;background:linear-gradient(90deg,rgb(0,171,241) 0px,rgb(0,171,241) 48px,rgb(0,171,240) 96px,rgb(0,170,239) 144px,rgb(0,169,238) 192px,rgb(0,166,237) 240px,rgb(0,164,236) 288px,rgb(0,160,235) 336px,rgb(0,156,234) 384px,rgb(0,151,232) 432px,rgb(0,145,229) 480px,rgb(0,138,225) 528px,rgb(1,130,220) 576px,rgb(1,121,215) 624px,rgb(2,112,209) 672px,rgb(2,103,203) 720px,rgb(2,94,197) 768px,rgb(2,86,191) 816px,rgb(3,79,187) 864px,rgb(3,73,184) 912px,rgb(3,67,182) 960px,rgb(3,62,181) 1008px,rgb(3,60,180) 1024px)"></div><div style="top:840px;height:12px;background:linear-gradient(90deg,rgb(0,171,241) 0px,rgb(0,171,240) 48px,rgb(0,171,240) 96px,rgb(0,170,239) 144px,rgb(0,168,238) 192px,rgb(0,166,236) 240px,rgb(0,163,235) 288px,rgb(0,160,234) 336px,rgb(0,155,233) 384px,rgb(0,150,231) 432px,rgb(0,144,228) 480px,rgb(0,137,225) 528px,rgb(1,129,220) 576px,rgb(1,121,214) 624px,rgb(2,112,209) 672px,rgb(2,103,203) 720px,rgb(2,94,197) 768px,rgb(2,86,191) 816px,rgb(3,79,187) 864px,rgb(3,73,184) 912px,rgb(3,67,182) 960px,rgb(3,62,181) 1008px,rgb(3,60,180) 1024px)"></div></div>
<!-- wallpaper extras -->
<svg class="abs" style="left:0;top:0" width="1024" height="844">
  <defs>
    <radialGradient id="glow" cx="0" cy="0" r="1" gradientUnits="userSpaceOnUse" gradientTransform="translate(795 380) scale(130 230)">
      <stop offset="0" stop-color="#1a90ff" stop-opacity="0.5"/>
      <stop offset="0.45" stop-color="#0a70f5" stop-opacity="0.3"/>
      <stop offset="1" stop-color="#0050e0" stop-opacity="0"/>
    </radialGradient>
    <radialGradient id="glow2" cx="0" cy="0" r="1" gradientUnits="userSpaceOnUse" gradientTransform="translate(805 335) scale(60 70)">
      <stop offset="0" stop-color="#1a90ff" stop-opacity="0.3"/>
      <stop offset="1" stop-color="#1080ff" stop-opacity="0"/>
    </radialGradient>
    <linearGradient id="pane1" x1="0" y1="0" x2="0" y2="1">
      <stop offset="0" stop-color="#26b4f8"/><stop offset="0.5" stop-color="#20aef8"/><stop offset="1" stop-color="#22a8f6"/>
    </linearGradient>
    <linearGradient id="pane2" x1="0" y1="0" x2="0" y2="1">
      <stop offset="0" stop-color="#28acfc"/><stop offset="0.45" stop-color="#24a8fa"/><stop offset="0.47" stop-color="#3ab8ff"/><stop offset="1" stop-color="#1e98f6"/>
    </linearGradient>
  </defs>
  <rect x="600" y="120" width="424" height="560" fill="url(#glow)"/>
  <rect x="730" y="250" width="150" height="170" fill="url(#glow2)"/>
  <linearGradient id="beam" gradientUnits="userSpaceOnUse" x1="300" y1="189" x2="284" y2="245">
    <stop offset="0" stop-color="#60d0ff" stop-opacity="0.10"/><stop offset="1" stop-color="#60d0ff" stop-opacity="0"/>
  </linearGradient>
  <polygon points="0,104 600,274 600,334 0,164" fill="url(#beam)"/>
  <line x1="0" y1="104" x2="600" y2="274" stroke="#5ac8ff" stroke-opacity="0.3" stroke-width="2"/>
  <line x1="0" y1="595" x2="330" y2="558" stroke="#6ad4ff" stroke-opacity="0.15" stroke-width="2"/>
  <!-- logo panes -->
  <polygon points="700,345 795,332 795,440 700,440" fill="url(#pane1)"/>
  <polygon points="700,444 795,444 795,553 700,546" fill="url(#pane2)"/>
  <line x1="700" y1="346" x2="795" y2="333.5" stroke="#3cc8ff" stroke-width="1.8"/>
  <line x1="793.6" y1="333" x2="793.6" y2="440" stroke="#6ee4ff" stroke-width="2"/>
  <line x1="793.6" y1="444" x2="793.6" y2="553" stroke="#6ee4ff" stroke-width="2"/>
</svg>

<!-- back dialog: Sharing Properties -->
<div class="dlg" style="left:316px;top:269px;width:423px;height:562px;background:#f0f0f0;border:1px solid rgba(0,0,0,0.2);">
  <div class="abs" style="left:0;top:0;width:421px;height:36px;background:#fff;"></div>
</div>
<div class="abs" style="left:329px;top:279px;width:10px;height:15px;background:#f3d060;opacity:0.8"></div>
<div class="t" style="left:350px;top:281px;font-size:14px;letter-spacing:-0.2px;color:#9a9a9a;">Sharing Properties</div>
<svg class="abs" style="left:714px;top:280px" width="14" height="14"><path d="M1.5 1.5 L12.5 12.5 M12.5 1.5 L1.5 12.5" stroke="#a0a0a0" stroke-width="1.2"/></svg>
<!-- back dialog inner pieces left of front dialog -->
<div class="abs" style="left:325px;top:305px;width:20px;height:425px;box-sizing:border-box;border:1px solid #9a9a9a;border-right:none;background:#f0f0f0;"></div>
<div class="abs" style="left:326px;top:306px;width:18px;height:35px;background:#fff;"></div>
<div class="t" style="left:335px;top:318px;font-size:13px;color:#8a8a8a;">A</div>
<div class="abs" style="left:325px;top:730px;width:20px;height:57px;box-sizing:border-box;border:1px solid #dcdcdc;border-right:none;border-top:none;background:#fff;"></div>
<div class="abs" style="left:339px;top:730px;width:6px;height:26px;box-sizing:border-box;border:1px solid #d0d0d0;border-right:none;border-top:none;"></div>

<!-- front dialog: Permissions for Sharing -->
<div class="dlg" style="left:344px;top:305px;width:424px;height:526px;background:#f0f0f0;border:1px solid rgba(0,0,0,0.5);">
  <div class="abs" style="left:0;top:0;width:422px;height:36px;background:#fff;"></div>
</div>
<div class="abs" style="left:344px;top:360px;width:1px;height:16px;background:#505050;"></div>
<div class="abs" style="left:358px;top:315px;width:10px;height:14px;background:#f3d36a;"></div>
<div class="t" style="left:379px;top:317px;font-size:14px;letter-spacing:-0.2px;color:#1a1a1a;">Permissions for Sharing</div>
<svg class="abs" style="left:742px;top:316px" width="14" height="14"><path d="M1.5 1.5 L12.5 12.5 M12.5 1.5 L1.5 12.5" stroke="#222" stroke-width="1.3"/></svg>

<!-- tab + panel -->
<div class="abs" style="left:352px;top:373px;width:405px;height:414px;box-sizing:border-box;background:#fff;border:1px solid #dadada;"></div>
<div class="abs" style="left:352px;top:350px;width:118px;height:24px;box-sizing:border-box;background:#fff;border:1px solid #dadada;border-bottom:none;"></div>
<div class="t ui" style="left:361px;top:354px;letter-spacing:-0.6px;">Share Permissions</div>

<div class="t ui" style="left:369px;top:385px;">Group or user names:</div>
<div class="abs" style="left:369px;top:403px;width:374px;height:121px;box-sizing:border-box;border:1px solid #828790;background:#fff;"></div>
<div class="abs" style="left:395px;top:406px;width:346px;height:19px;background:#0078d7;"></div>
<div class="t ui" style="left:397px;top:410px;color:#fff;">Everyone</div>
<div class="t ui" style="left:397px;top:429px;">Administrators (WINDOWS-SERVER\Administrators)</div>
<!-- people icons -->
<svg class="abs" style="left:375px;top:406px" width="20" height="38">
  <ellipse cx="6" cy="5.6" rx="3.3" ry="4" fill="#3a7f96"/>
  <path d="M1.2 16.5 Q1 10.5 6 10.2 Q11 10.5 10.8 16.5 Z" fill="#3a90a6"/>
  <ellipse cx="13.8" cy="5.8" rx="3.5" ry="4.1" fill="#2d68a8"/>
  <path d="M8.3 17 Q8.3 10.8 13.8 10.5 Q19.3 10.8 19.2 17 Z" fill="#3486cc"/>
  <ellipse cx="6" cy="25" rx="3.3" ry="4" fill="#d6bf7e"/>
  <ellipse cx="6" cy="26" rx="2.2" ry="2.6" fill="#b89a60"/>
  <path d="M1.2 35.5 Q1 29.5 6 29.2 Q11 29.5 10.8 35.5 Z" fill="#84b462"/>
  <ellipse cx="13.8" cy="25.2" rx="3.5" ry="4.1" fill="#5e4a3e"/>
  <ellipse cx="13.8" cy="26.3" rx="2.3" ry="2.6" fill="#a8806a"/>
  <path d="M8.3 36 Q8.3 29.8 13.8 29.5 Q19.3 29.8 19.2 36 Z" fill="#7ea4cc"/>
</svg>

<div class="btn" style="left:561px;top:532px;width:85px;height:25px;"></div>
<div class="t ui" style="left:587px;top:538px;color:#1a1a1a;">Add...</div>
<div class="btn" style="left:656px;top:532px;width:85px;height:25px;"></div>
<div class="t ui" style="left:675px;top:538px;color:#1a1a1a;">Remove</div>

<div class="t ui" style="left:369px;top:575px;">Permissions for Everyone</div>
<div class="t ui" style="left:614px;top:575px;">Allow</div>
<div class="t ui" style="left:685px;top:575px;">Deny</div>
<div class="abs" style="left:369px;top:592px;width:374px;height:161px;box-sizing:border-box;border:1px solid #828790;background:#fff;"></div>
<div class="t ui" style="left:383px;top:600px;">Full Control</div>
<div class="t ui" style="left:383px;top:621px;">Change</div>
<div class="t ui" style="left:383px;top:642px;">Read</div>
<svg class="abs" style="left:615px;top:598px" width="90" height="60">
  <g fill="none" stroke="#444" stroke-width="1.4">
    <rect x="1.5" y="1.5" width="14" height="14"/>
    <rect x="1.5" y="22.5" width="14" height="14"/>
    <rect x="1.5" y="43.5" width="14" height="14"/>
    <rect x="71.5" y="1.5" width="14" height="14"/>
    <rect x="71.5" y="22.5" width="14" height="14"/>
    <rect x="71.5" y="43.5" width="14" height="14"/>
    <path d="M3.5 8.5 L7 12 L14 4.5"/>
    <path d="M3.5 29.5 L7 33 L14 25.5"/>
    <path d="M3.5 50.5 L7 54 L14 46.5"/>
  </g>
</svg>

<div class="btn" style="left:484px;top:796px;width:86px;height:25px;border:2px solid #0078d7;"></div>
<div class="t ui" style="left:517px;top:802px;color:#1a1a1a;">OK</div>
<div class="btn" style="left:578px;top:796px;width:86px;height:25px;"></div>
<div class="t ui" style="left:600px;top:802px;color:#1a1a1a;">Cancel</div>
<div class="btn" style="left:673px;top:796px;width:86px;height:25px;background:#cccccc;border-color:#bfbfbf;"></div>
<div class="t ui" style="left:700px;top:802px;color:#9a9a9a;">Apply</div>

<!-- watermark -->
<div class="t" style="right:-4px;top:789px;font-size:14px;letter-spacing:-0.23px;color:#dde9fb;text-align:right;">Windows Server 2022 Standard Evaluation</div>
<div class="t" style="right:-4px;top:809px;font-size:14px;letter-spacing:-0.1px;color:#dde9fb;text-align:right;">Windows License valid for 177 days</div>
<div class="t" style="right:-4px;top:828px;font-size:14px;letter-spacing:-0.43px;color:#dde9fb;text-align:right;">Build 20348.fe_release.210507-1500</div>

<!-- taskbar -->
<div class="abs" style="left:0;top:844px;width:1024px;height:40px;background:linear-gradient(90deg,#001c24 0px,#001a22 264px,#001420 440px,#000c1c 780px,#000618 1024px);"></div>
<div class="abs" style="left:0;top:844px;width:264px;height:40px;background:#f0f0f0;"></div>
<div class="t" style="left:-3px;top:861px;font-size:17px;color:#585858;">re to search</div>
<div class="abs" style="left:381px;top:844px;width:52px;height:40px;background:#304450;"></div>
<!-- task view -->
<svg class="abs" style="left:276px;top:850px" width="32" height="32">
  <g fill="none" stroke="#c9d1d9" stroke-width="1.3">
    <path d="M7.2 8 V11 H19.5 V8"/>
    <rect x="7.2" y="13.6" width="12.3" height="6.8"/>
    <path d="M7.2 26 V23 H19.5 V26"/>
    <path d="M23.8 8 V12.5 M23.8 16.2 V26"/>
  </g>
  <rect x="22.3" y="12.8" width="3" height="3" fill="#ffffff"/>
</svg>
<!-- edge -->
<svg class="abs" style="left:332px;top:848px" width="40" height="36">
  <defs>
    <linearGradient id="eg1" x1="0" y1="0" x2="1" y2="0.25">
      <stop offset="0" stop-color="#3ab4f2"/><stop offset="0.5" stop-color="#2cc6d0"/><stop offset="1" stop-color="#5ee070"/>
    </linearGradient>
    <linearGradient id="eg2" x1="0" y1="0" x2="0.5" y2="1">
      <stop offset="0" stop-color="#1c8ee6"/><stop offset="1" stop-color="#1258c0"/>
    </linearGradient>
  </defs>
  <circle cx="20" cy="19.3" r="14" fill="url(#eg2)"/>
  <path d="M34 21.5 Q33 25.5 27 25.5 Q22 25.5 19.5 23 Q21 28.5 27.5 29 Q31.5 28.5 33.2 25 Z" fill="#0a2c5a"/>
  <path d="M6.1 18.5 A14 14 0 0 1 34 19.3 L34 21.5 Q33 25 27 25 Q21.5 25 20 20 Q18.5 13.8 12.8 13.5 Q8.5 13.5 6.1 17.2 Z" fill="url(#eg1)"/>
  <ellipse cx="20.8" cy="20.2" rx="3.2" ry="4.2" fill="#06203e"/>
</svg>
<!-- explorer -->
<svg class="abs" style="left:388px;top:848px" width="40" height="36">
  <path d="M8 9 H17 L19 10.5 H33.4 V29.3 H8 Z" fill="#f4d25c"/>
  <rect x="8" y="9" width="10" height="2.6" fill="#d9a520"/>
  <rect x="8" y="12" width="25.4" height="1" fill="#f7e08a"/>
  <path d="M13 29.3 V20.4 H28.5 V29.3 H24.5 V25 H17 V29.3 Z" fill="#3a9ae0"/>
  <rect x="18" y="25.6" width="5.5" height="3" fill="#f4d25c"/>
</svg>
<!-- tray: chevron -->
<svg class="abs" style="left:812px;top:852px" width="84" height="30">
  <g fill="none" stroke="#c8d0d8" stroke-width="1.4">
    <path d="M5 18.9 L12.1 11.6 L19 18.9"/>
    <rect x="31.5" y="8.8" width="18.2" height="11"/>
    <path d="M40.2 19.8 V23.6 M36 23.8 H44.4"/>
    <rect x="31.5" y="8.8" width="4.5" height="5"/>
    <path d="M33.5 13.8 V23.8 H36"/>
    <path d="M58.5 12.5 H61.5 L66 8.6 V22.6 L61.5 18.8 H58.5 Z"/>
  </g>
  <circle cx="72.2" cy="19.7" r="5.4" fill="#d8333d"/>
  <path d="M70 17.5 L74.4 21.9 M74.4 17.5 L70 21.9" stroke="#ffd0d4" stroke-width="1.3"/>
</svg>
<div class="t" style="left:907px;top:850px;font-size:14px;letter-spacing:-0.4px;color:#e8ecef;">2:22 PM</div>
<div class="t" style="left:898px;top:871px;font-size:14px;letter-spacing:-0.35px;color:#e8ecef;">10/17/2022</div>
<!-- notification -->
<svg class="abs" style="left:970px;top:848px" width="54" height="36">
  <path d="M13 10 H32 V25.5 H23 L20.5 28 V25.5 H13 Z" fill="#f4f6f8"/>
  <g stroke="#333" stroke-width="1.2"><path d="M17 14.4 H28 M17 17.6 H28 M17 20.8 H23"/></g>
  <circle cx="31.7" cy="27.3" r="9" fill="#2a2d30" stroke="#777" stroke-width="1.2"/>
  <text x="31.7" y="32" font-family="Liberation Sans" font-weight="bold" font-size="13" fill="#f0f0f0" text-anchor="middle">2</text>
</svg>
</div></body></html>
